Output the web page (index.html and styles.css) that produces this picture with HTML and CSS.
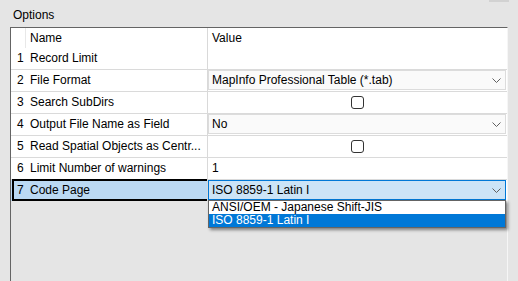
FILE: index.html
```
<!DOCTYPE html>
<html>
<head>
<meta charset="utf-8">
<link rel="stylesheet" href="styles.css">
</head>
<body>
<div class="topbar"></div>
<div class="label">Options</div>
<div class="grid">
  <div class="row header">
    <div class="num"></div>
    <div class="name">Name</div>
    <div class="value">Value</div>
  </div>
  <div class="row">
    <div class="num">1</div>
    <div class="name">Record Limit</div>
    <div class="value"></div>
  </div>
  <div class="row">
    <div class="num">2</div>
    <div class="name">File Format</div>
    <div class="value"><div class="combo"><span>MapInfo Professional Table (*.tab)</span><svg class="chev" width="9" height="5" viewBox="0 0 9 5"><path d="M0.5 0.5 L4.5 4.5 L8.5 0.5" fill="none" stroke="#606060" stroke-width="1"/></svg></div></div>
  </div>
  <div class="row">
    <div class="num">3</div>
    <div class="name">Search SubDirs</div>
    <div class="value center"><span class="check"></span></div>
  </div>
  <div class="row">
    <div class="num">4</div>
    <div class="name">Output File Name as Field</div>
    <div class="value"><div class="combo"><span>No</span><svg class="chev" width="9" height="5" viewBox="0 0 9 5"><path d="M0.5 0.5 L4.5 4.5 L8.5 0.5" fill="none" stroke="#606060" stroke-width="1"/></svg></div></div>
  </div>
  <div class="row">
    <div class="num">5</div>
    <div class="name">Read Spatial Objects as Centr...</div>
    <div class="value center"><span class="check"></span></div>
  </div>
  <div class="row">
    <div class="num">6</div>
    <div class="name">Limit Number of warnings</div>
    <div class="value">1</div>
  </div>
  <div class="row selected">
    <div class="num">7</div>
    <div class="name">Code Page</div>
    <div class="value">
      <div class="combo active"><span>ISO 8859-1 Latin I</span><svg class="chev" width="9" height="5" viewBox="0 0 9 5"><path d="M0.5 0.5 L4.5 4.5 L8.5 0.5" fill="none" stroke="#606060" stroke-width="1"/></svg></div>
      <div class="dropdown">
        <div class="item">ANSI/OEM - Japanese Shift-JIS</div>
        <div class="item hl">ISO 8859-1 Latin I</div>
      </div>
    </div>
  </div>
</div>
</body>
</html>
```
FILE: styles.css
```
html, body {
  margin: 0;
  padding: 0;
  height: 281px;
  overflow: hidden;
}
body {
  background: #e5e5e5;
  font-family: "Segoe UI", "Liberation Sans", Arial, sans-serif;
  font-size: 12px;
  color: #000;
}
.topbar {
  height: 2px;
  width: 20px;
  margin-left: 489px;
  background: #d2d2d2;
}
.label {
  margin-top: 6px;
  height: 15px;
  line-height: 15px;
  padding-left: 13px;
}
.grid {
  margin-top: 4px;
  margin-left: 10px;
  width: 498px;
  height: 254px;
  box-sizing: border-box;
  border-top: 1px solid #646464;
  border-left: 1px solid #646464;
  border-right: 1px solid #f6f6f6;
}
.row {
  display: flex;
  height: 22px;
  box-sizing: border-box;
  border-bottom: 1px solid #dadada;
  background: #fff;
  line-height: 21px;
  position: relative;
}
.row.header {
  height: 20px;
  line-height: 20px;
  border-bottom: none;
}
.num {
  width: 15px;
  box-sizing: border-box;
  padding-left: 6px;
  flex: none;
}
.header .num {
  border-right: 1px solid #e8e8e8;
}
.name {
  width: 182px;
  box-sizing: border-box;
  padding-left: 4px;
  border-right: 1px solid #d9d9d9;
  white-space: nowrap;
  overflow: hidden;
  flex: none;
}
.value {
  width: 299px;
  box-sizing: border-box;
  padding-left: 4px;
  flex: none;
  position: relative;
}
.value.center {
  display: flex;
  align-items: center;
  justify-content: center;
  padding-left: 0;
}
.check {
  width: 13px;
  height: 13px;
  box-sizing: border-box;
  border: 1px solid #333;
  border-radius: 3px;
  background: #fff;
}
.row .value:has(.combo) {
  padding-left: 0;
}
.combo {
  width: 298px;
  height: 20px;
  box-sizing: border-box;
  border: 1px solid #dcdcdc;
  background: #fafafa;
  display: flex;
  align-items: center;
  justify-content: space-between;
  padding: 0 4px 0 3px;
  line-height: 18px;
}
.chev {
  margin-right: 0;
  display: block;
}
.row.selected {
  border-bottom: none;
  height: 21px;
  background: #bbd9f3;
}
.row.selected::after {
  content: "";
  position: absolute;
  left: 1px;
  top: -1px;
  width: 195px;
  height: 22px;
  box-sizing: border-box;
  border: 2px solid #000;
  border-right: none;
  pointer-events: none;
}
.selected .value {
  background: #fff;
}
.combo.active {
  background: #cce4f7;
  border-color: #0078d7;
}
.dropdown {
  position: absolute;
  left: 0;
  top: 20px;
  width: 298px;
  box-sizing: border-box;
  border: 1px solid #646464;
  background: #fff;
  box-shadow: 2px 2px 3px rgba(0, 0, 0, 0.45);
  z-index: 5;
}
.item {
  height: 13px;
  line-height: 13px;
  padding-left: 3px;
  white-space: nowrap;
}
.item.hl {
  background: #0078d7;
  color: #fff;
}
```
